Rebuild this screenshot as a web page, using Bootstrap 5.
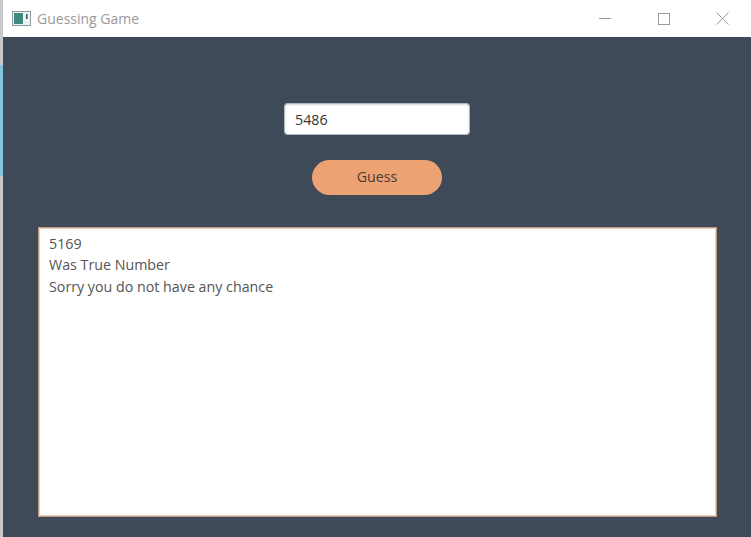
<!DOCTYPE html>
<html lang="en">
<head>
<meta charset="utf-8">
<title>Guessing Game</title>
<link href="https://cdn.jsdelivr.net/npm/bootstrap@5.3.0/dist/css/bootstrap.min.css" rel="stylesheet">
<style>
html, body { height: 537px; overflow: hidden; }
body { background: #3e4a58; font-family: "Open Sans", "Noto Sans", sans-serif; }
.desk-strip { width: 3px; background: #c9c9cc; flex: none; }
.desk-blue { height: 111px; margin-top: 65px; background: #86c4e0; }
.win-main { min-width: 0; }
.win-bar { height: 37px; background: #fff; flex: none; }
.win-title { color: #9a9a9a; font-size: 14px; margin-left: 6px; }
.win-icon { margin-left: 9px; }
.win-ctl { width: 59px; height: 37px; }
.win-ctl svg { display: block; }
.win-ctl-end { width: 58px; padding-left: 1px; }
.win-body { background: #3e4a58; padding: 66px 35px 20px 35px; }
.guess-input.form-control { width: 186px; height: 32px; padding: 0 10px; font-size: 14.25px; color: #333; border: 1px solid #aeb6c0; border-radius: 3px; font-family: inherit; box-shadow: inset 0 1px 2px rgba(0,0,0,.15); }
.guess-btn.btn { width: 130px; height: 35px; margin-top: 25px; padding: 0 0 2px; font-size: 14.25px; color: #4a3a30; background: #eda274; border: 0; }
.guess-log.form-control { align-self: flex-start; width: calc(100% + 1px); height: 290px; margin-top: 32px; padding: 4.7px 10px 5px; font-size: 14.25px; line-height: 21.5px; color: #555; border: 1px solid #c09a80; border-radius: 0; resize: none; font-family: inherit; box-shadow: inset 0 0 0 1px #ecd0bb; overflow: hidden; }
</style>
</head>
<body>
<div class="d-flex h-100">
  <div class="desk-strip"><div class="desk-blue"></div></div>
  <div class="win-main flex-grow-1 d-flex flex-column">
    <div class="win-bar d-flex align-items-center">
      <svg class="win-icon" width="19" height="16" viewBox="0 0 19 16" aria-hidden="true">
        <rect x="0.5" y="0.5" width="18" height="14" fill="#eef1f2" stroke="#8d9aa3"/>
        <rect x="2" y="2" width="9" height="11" fill="#3f8a80"/>
        <rect x="14" y="3" width="1.6" height="5" fill="#4b5a62"/>
      </svg>
      <span class="win-title">Guessing Game</span>
      <div class="ms-auto d-flex">
        <div class="win-ctl d-flex align-items-center justify-content-center"><svg width="12" height="12" viewBox="0 0 12 12"><path d="M0 5.5H12" stroke="#999" fill="none"/></svg></div>
        <div class="win-ctl d-flex align-items-center justify-content-center"><svg width="12" height="12" viewBox="0 0 12 12"><rect x="0.5" y="0.5" width="11" height="11" stroke="#999" fill="none"/></svg></div>
        <div class="win-ctl win-ctl-end d-flex align-items-center justify-content-center"><svg width="13" height="13" viewBox="0 0 13 13"><path d="M0.5 0.5L12.5 12.5M12.5 0.5L0.5 12.5" stroke="#999" fill="none"/></svg></div>
      </div>
    </div>
    <div class="win-body flex-grow-1 d-flex flex-column align-items-center">
      <input class="guess-input form-control" type="text" value="5486">
      <button class="guess-btn btn rounded-pill" type="button">Guess</button>
      <textarea class="guess-log form-control">5169
Was True Number
Sorry you do not have any chance</textarea>
    </div>
  </div>
</div>
<script src="https://cdn.jsdelivr.net/npm/bootstrap@5.3.0/dist/js/bootstrap.bundle.min.js"></script>
</body>
</html>
